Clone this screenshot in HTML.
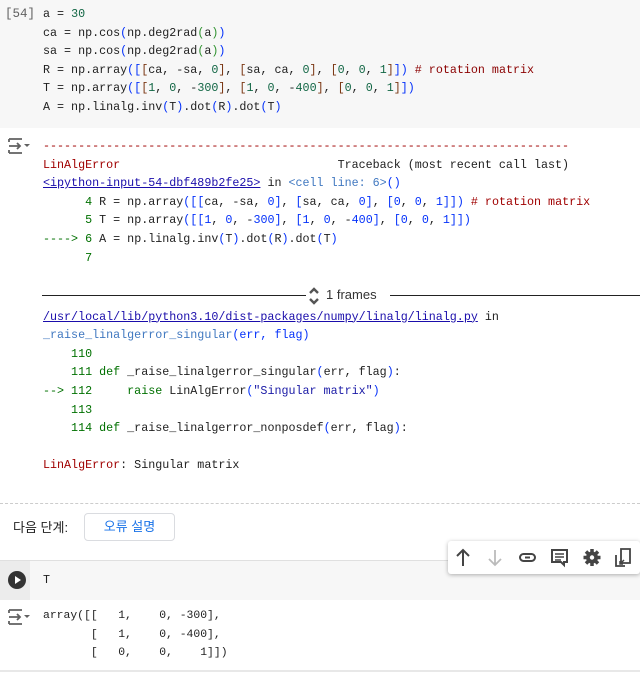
<!DOCTYPE html>
<html><head><meta charset="utf-8"><style>
*{margin:0;padding:0;box-sizing:border-box}
body{width:640px;height:675px;background:#fff;position:relative;overflow:hidden;font-family:"Liberation Mono","Noto Sans CJK KR",monospace;font-size:11.7px;color:#212121}
.abs{position:absolute}
.ln{position:absolute;left:43px;white-space:pre;line-height:18.6px;height:18.6px}
.g{color:#116644}.b{color:#0431fa}.br{color:#7b3814}.gp{color:#319331}.cm{color:#8b0000}
.r{color:#a00000}.gn{color:#007000}.bl{color:#1a1aa6}.lk{color:#1a0dab;text-decoration:underline}.cb{color:#4078c0}
.sans{font-family:"Liberation Sans","Noto Sans CJK KR",sans-serif}
.o .ln{font-size:11.4px}
</style></head><body>
<div class="abs" style="left:0;top:0;width:640px;height:128px;background:#f7f7f7"></div>
<div class="abs" style="left:5px;top:5px;color:#616161;line-height:18px;font-size:12.5px">[54]</div>
<div class="ln" style="top:5px">a = <span class="g">30</span></div>
<div class="ln" style="top:23.6px">ca = np.cos<span class="b">(</span>np.deg2rad<span class="gp">(</span>a<span class="gp">)</span><span class="b">)</span></div>
<div class="ln" style="top:42.2px">sa = np.cos<span class="b">(</span>np.deg2rad<span class="gp">(</span>a<span class="gp">)</span><span class="b">)</span></div>
<div class="ln" style="top:60.8px">R = np.array<span class="b">([</span><span class="br">[</span>ca, -sa, <span class="g">0</span><span class="br">]</span>, <span class="br">[</span>sa, ca, <span class="g">0</span><span class="br">]</span>, <span class="br">[</span><span class="g">0</span>, <span class="g">0</span>, <span class="g">1</span><span class="br">]</span><span class="b">])</span> <span class="cm"># rotation matrix</span></div>
<div class="ln" style="top:79.4px">T = np.array<span class="b">([</span><span class="br">[</span><span class="g">1</span>, <span class="g">0</span>, -<span class="g">300</span><span class="br">]</span>, <span class="br">[</span><span class="g">1</span>, <span class="g">0</span>, -<span class="g">400</span><span class="br">]</span>, <span class="br">[</span><span class="g">0</span>, <span class="g">0</span>, <span class="g">1</span><span class="br">]</span><span class="b">])</span></div>
<div class="ln" style="top:98px">A = np.linalg.inv<span class="b">(</span>T<span class="b">)</span>.dot<span class="b">(</span>R<span class="b">)</span>.dot<span class="b">(</span>T<span class="b">)</span></div>

<svg class="abs" style="left:7px;top:137px" width="24" height="20" viewBox="0 0 24 20"><g fill="none" stroke="#616161" stroke-width="1.8"><path d="M2 2h13M2 9h11M10 6l3 3-3 3M2 16h13M2 2v3M2 13v3"/></g><path d="M17 7h6l-3 3z" fill="#616161"/></svg>
<div class="ln r" style="top:137px">---------------------------------------------------------------------------</div>
<div class="ln" style="top:155.6px"><span class="r">LinAlgError</span>                               Traceback (most recent call last)</div>
<div class="ln" style="top:174.2px"><span class="lk">&lt;ipython-input-54-dbf489b2fe25&gt;</span> in <span class="cb">&lt;cell line: 6&gt;</span><span class="b">()</span></div>
<div class="ln" style="top:192.8px"><span class="gn">      4</span> R = np.array<span class="b">([[</span>ca, -sa, <span class="b">0]</span>, <span class="b">[</span>sa, ca, <span class="b">0]</span>, <span class="b">[0</span>, <span class="b">0</span>, <span class="b">1]])</span> <span class="r"># rotation matrix</span></div>
<div class="ln" style="top:211.4px"><span class="gn">      5</span> T = np.array<span class="b">([[1</span>, <span class="b">0</span>, -<span class="b">300]</span>, <span class="b">[1</span>, <span class="b">0</span>, -<span class="b">400]</span>, <span class="b">[0</span>, <span class="b">0</span>, <span class="b">1]])</span></div>
<div class="ln" style="top:230px"><span class="gn">----&gt; 6</span> A = np.linalg.inv<span class="b">(</span>T<span class="b">)</span>.dot<span class="b">(</span>R<span class="b">)</span>.dot<span class="b">(</span>T<span class="b">)</span></div>
<div class="ln" style="top:248.6px"><span class="gn">      7</span></div>

<div class="abs" style="left:42px;top:295px;width:264px;height:1px;background:#222"></div>
<svg class="abs" style="left:308px;top:286px" width="12" height="20" viewBox="0 0 12 20"><path d="M2 7l4-4 4 4M2 13l4 4 4-4" fill="none" stroke="#555" stroke-width="2.4"/></svg>
<div class="abs sans" style="left:326px;top:287px;font-size:13px;color:#333">1 frames</div>
<div class="abs" style="left:390px;top:295px;width:250px;height:1px;background:#222"></div>

<div class="ln" style="top:307.5px"><span class="lk">/usr/local/lib/python3.10/dist-packages/numpy/linalg/linalg.py</span> in</div>
<div class="ln" style="top:326.1px"><span class="cb">_raise_linalgerror_singular</span><span class="b">(err, flag)</span></div>
<div class="ln" style="top:344.7px"><span class="gn">    110</span></div>
<div class="ln" style="top:363.3px"><span class="gn">    111 def</span> _raise_linalgerror_singular<span class="b">(</span>err, flag<span class="b">)</span>:</div>
<div class="ln" style="top:381.9px"><span class="gn">--&gt; 112     raise</span> LinAlgError<span class="b">(</span><span class="bl">"Singular matrix"</span><span class="b">)</span></div>
<div class="ln" style="top:400.5px"><span class="gn">    113</span></div>
<div class="ln" style="top:419.1px"><span class="gn">    114 def</span> _raise_linalgerror_nonposdef<span class="b">(</span>err, flag<span class="b">)</span>:</div>
<div class="ln" style="top:456.3px"><span class="r">LinAlgError</span>: Singular matrix</div>

<div class="abs" style="left:0;top:503px;width:640px;border-top:1.5px dashed #ccc"></div>
<div class="abs sans" style="left:13px;top:517px;font-size:13px;color:#222">다음 단계:</div>
<div class="abs sans" style="left:84px;top:513px;width:91px;height:28px;border:1px solid #dadce0;border-radius:4px;color:#1a73e8;font-size:13px;text-align:center;line-height:26px">오류 설명</div>

<div class="abs" style="left:0;top:560px;width:640px;height:1px;background:#e0e0e0"></div>
<div class="abs" style="left:0;top:561px;width:640px;height:39px;background:#f7f7f7"></div>
<div class="abs" style="left:0;top:561px;width:30px;height:39px;background:#ececec"></div>
<svg class="abs" style="left:7px;top:570px" width="20" height="20" viewBox="0 0 20 20"><circle cx="10" cy="10" r="9" fill="#333"/><path d="M8 6l6 4-6 4z" fill="#fff"/></svg>
<div class="ln" style="top:571px">T</div>

<div class="abs" style="left:448px;top:541px;width:192px;height:33px;background:#fff;border-radius:3px;box-shadow:0 1px 4px rgba(0,0,0,.3)"></div>
<svg class="abs" style="left:448px;top:541px" width="192" height="33" viewBox="0 0 192 33">
<path d="M15 25V10M9 15l6-6 6 6" fill="none" stroke="#444" stroke-width="2"/>
<path d="M47 9v15M41 18l6 6 6-6" fill="none" stroke="#bbb" stroke-width="1.8"/>
<rect x="72" y="13" width="15" height="7" rx="3.5" fill="none" stroke="#444" stroke-width="2"/><path d="M76 16.5h7" stroke="#fff" stroke-width="3"/><path d="M77 16.5h5" stroke="#444" stroke-width="2"/>
<path d="M104 9h15v12h-3v3l-3-3h-9z" fill="none" stroke="#444" stroke-width="2"/><path d="M107 13h9M107 16h9M107 19h6" stroke="#444" stroke-width="1.5"/>
<circle cx="144" cy="16.5" r="6" fill="#444"/><path d="M144 8v17M135.5 16.5h17M138 10.5l12 12M150 10.5l-12 12" stroke="#444" stroke-width="3.5"/><circle cx="144" cy="16.5" r="2.2" fill="#fff"/>
<path d="M173 8h9v14h-9z" fill="none" stroke="#444" stroke-width="1.8"/><path d="M168 14v11h9" fill="none" stroke="#444" stroke-width="1.8"/><path d="M172 23l4-4M172 20v3h3" fill="none" stroke="#444" stroke-width="1.5"/>
</svg>

<svg class="abs" style="left:7px;top:608px" width="24" height="20" viewBox="0 0 24 20"><g fill="none" stroke="#616161" stroke-width="1.8"><path d="M2 2h13M2 9h11M10 6l3 3-3 3M2 16h13M2 2v3M2 13v3"/></g><path d="M17 7h6l-3 3z" fill="#616161"/></svg>
<div class="o">
<div class="ln" style="top:607px">array([[   1,    0, -300],</div>
<div class="ln" style="top:625.6px">       [   1,    0, -400],</div>
<div class="ln" style="top:644.2px">       [   0,    0,    1]])</div>
</div>
<div class="abs" style="left:0;top:670px;width:640px;height:2px;background:#e8e8e8"></div>
</body></html>
